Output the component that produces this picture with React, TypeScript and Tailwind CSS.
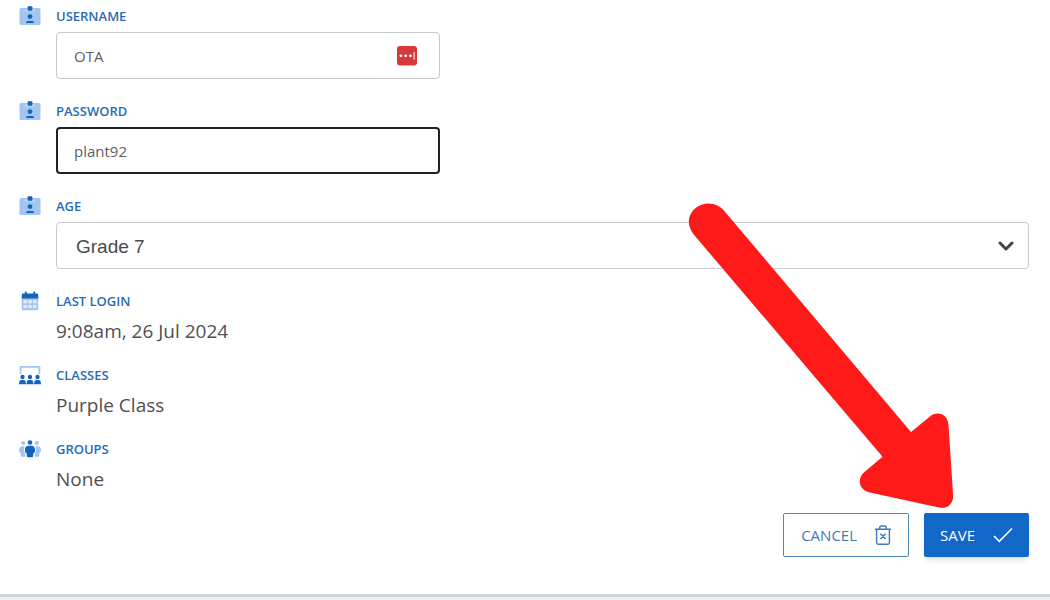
import type { ReactNode } from 'react';

interface RowProps {
  icon: ReactNode;
  label: string;
  htmlFor?: string;
  children: ReactNode;
}

function BadgeIcon() {
  return (
    <svg className="h-5 w-[22px]" viewBox="0 0 22 20" aria-hidden="true">
      <rect x="0.5" y="2" width="21" height="17" rx="1.5" fill="#a3c5f1" />
      <rect x="6" y="3.4" width="10" height="2.2" fill="#c3daf6" />
      <rect x="8.6" y="0.2" width="4.8" height="4.6" rx="1" fill="#1464bd" />
      <circle cx="11" cy="10.6" r="2.4" fill="#1464bd" />
      <path d="M7 16.9c0-1.400 1-2 2.400-2h3.200c1.400 0 2.400.6 2.400 2z" fill="#1464bd" />
    </svg>
  );
}

function CalendarIcon() {
  return (
    <svg className="h-5 w-[22px]" viewBox="0 0 22 20" aria-hidden="true">
      <path d="M2.700 7h16.600v10.800c0 .9-.6 1.500-1.500 1.500H4.200c-.9 0-1.500-.6-1.500-1.500z" fill="#a3c5f1" />
      <path
        d="M4.200 2.600h1.600V1.300c0-1 2-1 2 0v1.300h6.400V1.300c0-1 2-1 2 0v1.300h1.600c.9 0 1.500.6 1.500 1.500V7.600H2.700V4.100c0-.9.6-1.500 1.500-1.500z"
        fill="#1464bd"
      />
      <path
        d="M4.500 9h3.500v3.200H4.500zM9.250 9h3.500v3.200h-3.500zM14 9h3.500v3.200H14zM4.500 13.900h3.500v3.200H4.500zM9.250 13.900h3.500v3.200h-3.500zM14 13.900h3.500v3.200H14z"
        fill="#e2edfb"
      />
    </svg>
  );
}

function ClassIcon() {
  return (
    <svg className="h-5 w-[22px]" viewBox="0 0 22 20" aria-hidden="true">
      <path d="M1.600 9V1.800h18.800V9" fill="none" stroke="#a3c5f1" strokeWidth="1.8" />
      <g fill="#1464bd">
        <circle cx="3.500" cy="12" r="2.2" />
        <circle cx="11" cy="12" r="2.2" />
        <circle cx="18.500" cy="12" r="2.2" />
        <path d="M0 19.200c0-2.600.8-4.200 2.500-4.200h2c1.700 0 2.500 1.600 2.500 4.200zM7.500 19.200c0-2.600.8-4.200 2.500-4.200h2c1.700 0 2.500 1.600 2.500 4.200zM15 19.200c0-2.600.8-4.200 2.500-4.200h2c1.700 0 2.500 1.600 2.500 4.200z" />
      </g>
    </svg>
  );
}

function GroupIcon() {
  return (
    <svg className="h-5 w-[22px]" viewBox="0 0 22 20" aria-hidden="true">
      <g fill="#a3c5f1">
        <circle cx="4.200" cy="4" r="2.1" />
        <circle cx="17.800" cy="4" r="2.1" />
        <path d="M5.700 7.200H3.400C1.200 7.200 0 8.800 0 10.900c0 1.600.7 2.600 1.700 3.200v2.200c0 .9.600 1.500 1.500 1.500h3.100V15.200C5 13.600 4.500 9.700 5.700 7.200z" />
        <path d="M16.300 7.200h2.300c2.200 0 3.400 1.600 3.400 3.700 0 1.600-.7 2.600-1.700 3.200v2.200c0 .9-.6 1.500-1.500 1.500h-3.100V15.200c1.300-1.600 1.800-5.500.6-8z" />
      </g>
      <g fill="#1464bd">
        <circle cx="11" cy="3.500" r="2.3" />
        <path d="M9.500 6.800h3c2.200 0 3.500 1.600 3.500 3.700v1.200c0 1.500-.8 2.400-1.800 2.900v2.200c0 .9-.6 1.500-1.500 1.500H9.300c-.9 0-1.500-.6-1.500-1.500v-2.200c-1-.5-1.800-1.400-1.800-2.900v-1.200c0-2.100 1.300-3.700 3.500-3.700z" />
      </g>
    </svg>
  );
}

function PasswordManagerIcon() {
  return (
    <svg className="h-5 w-5" viewBox="0 0 20 20" aria-hidden="true">
      <rect width="20" height="19.5" rx="3" fill="#d53a3a" />
      <g fill="#fff">
        <circle cx="3.9" cy="9.8" r="1.4" />
        <circle cx="8.7" cy="9.8" r="1.4" />
        <circle cx="13.5" cy="9.8" r="1.4" />
        <rect x="16.600" y="6" width="1" height="7.6" />
      </g>
    </svg>
  );
}

function TrashIcon() {
  return (
    <svg className="h-5 w-4" viewBox="0 0 16 20" fill="none" stroke="currentColor" strokeWidth="1.4" aria-hidden="true">
      <path d="M0 4.200h16M1.600 4.200v13.600c0 .9.5 1.400 1.400 1.400h10c.9 0 1.400-.5 1.400-1.400V4.200M4.700 4.200V2.600c0-1 .6-1.600 1.600-1.600h3.400c1 0 1.600.6 1.600 1.600v1.600M5.400 8.700l5.200 5.400M10.600 8.700l-5.200 5.400" />
    </svg>
  );
}

function CheckIcon() {
  return (
    <svg className="h-4 w-5" viewBox="0 0 20 16" fill="none" stroke="currentColor" strokeWidth="1.6" aria-hidden="true">
      <path d="M1 9l5.300 5.300L19 1.500" />
    </svg>
  );
}

function ArrowPointer() {
  return (
    <svg
      className="pointer-events-none absolute right-[75px] bottom-full mb-1 h-[306px] w-[266px]"
      viewBox="0 0 266 306"
      aria-hidden="true"
    >
      <path
        d="M5.300 31C-2 21 .5 12 6 6.500C15-2 29-1.500 37 8.700L223 229L242 213.500C250 207 260 212 260.500 222L265 291C266 300 260 306.500 251 304.500L182 289.500C171 287 168 276 177 268.500L194.500 253.700Z"
        fill="#ff1a1a"
      />
    </svg>
  );
}

function Row({ icon, label, htmlFor, children }: RowProps) {
  const labelClass = 'block text-[13px] leading-5 font-semibold text-[#2a6cb3]';

  return (
    <div className="flex gap-[15px]">
      <div className="w-[22px] shrink-0">{icon}</div>
      <div className="min-w-0 flex-1">
        {htmlFor ? (
          <label htmlFor={htmlFor} className={labelClass}>
            {label}
          </label>
        ) : (
          <h2 className={labelClass}>{label}</h2>
        )}
        <div className="mt-1.5">{children}</div>
      </div>
    </div>
  );
}

const details = [
  { label: 'LAST LOGIN', value: '9:08am, 26 Jul 2024', icon: <CalendarIcon /> },
  { label: 'CLASSES', value: 'Purple Class', icon: <ClassIcon /> },
  { label: 'GROUPS', value: 'None', icon: <GroupIcon /> },
];

export default function App() {
  return (
    <div className="min-h-screen bg-[#eef0f2] font-['Open_Sans',sans-serif]">
      <form
        className="border-b-[3px] border-[#cfd5da] bg-white pt-1.5 pr-[21px] pb-[37px] pl-[19px]"
        onSubmit={(e) => e.preventDefault()}
      >
        <div className="flex flex-col gap-[22px]">
          <Row icon={<BadgeIcon />} label="USERNAME" htmlFor="username">
            <div className="relative max-w-96">
              <input
                id="username"
                type="text"
                defaultValue="OTA"
                className="block h-[47px] w-full rounded border border-[#c9c9c9] bg-white pr-14 pl-[17px] text-[15px] text-[#606060] outline-none"
              />
              <span className="absolute inset-y-0 right-[23px] flex items-center">
                <PasswordManagerIcon />
              </span>
            </div>
          </Row>

          <Row icon={<BadgeIcon />} label="PASSWORD" htmlFor="password">
            <input
              id="password"
              type="text"
              defaultValue="plant92"
              className="block h-[47px] w-full max-w-96 rounded border-2 border-[#222222] bg-white px-4 text-[15px] text-[#606060] outline-none"
            />
          </Row>

          <Row icon={<BadgeIcon />} label="AGE" htmlFor="age">
            <div className="relative">
              <select
                id="age"
                defaultValue="7"
                className="block h-[47px] w-full appearance-none rounded border border-[#c9c9c9] bg-white px-[19px] pt-1 font-['Liberation_Sans',sans-serif] text-[19px] text-[#4a4a4a] outline-none"
              >
                <option value="6">Grade 6</option>
                <option value="7">Grade 7</option>
                <option value="8">Grade 8</option>
              </select>
              <span className="pointer-events-none absolute inset-y-0 right-[15px] flex items-center">
                <svg className="h-2.5 w-4" viewBox="0 0 16 10" fill="none" aria-hidden="true">
                  <path d="M2 2l6 6 6-6" stroke="#404449" strokeWidth="3" strokeLinecap="round" strokeLinejoin="round" />
                </svg>
              </span>
            </div>
          </Row>

          <div className="flex flex-col gap-5">
            {details.map((item) => (
              <Row key={item.label} icon={item.icon} label={item.label}>
                <p className="text-[19px] leading-7 text-[#505050]">{item.value}</p>
              </Row>
            ))}
          </div>
        </div>

        <div className="relative mt-5 flex justify-end gap-[15px]">
          <button
            type="button"
            className="flex h-11 items-center gap-[18px] rounded-xs border border-[#4b86bd] bg-white px-[17px] text-[15px] text-[#3f7ab5]"
          >
            CANCEL
            <TrashIcon />
          </button>
          <button
            type="submit"
            className="flex h-11 items-center gap-[18px] rounded-xs bg-[#1168c8] px-4 text-[15px] text-white shadow-md"
          >
            SAVE
            <CheckIcon />
          </button>
          <ArrowPointer />
        </div>
      </form>
    </div>
  );
}
